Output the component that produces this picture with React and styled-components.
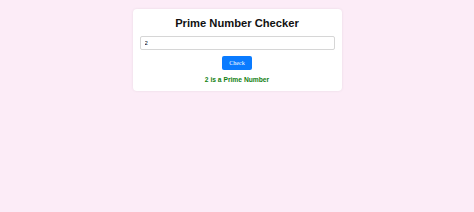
import React, { useState } from "react";
import styled, { createGlobalStyle } from "styled-components";

const GlobalStyle = createGlobalStyle`
  html, body {
    margin: 0;
    padding: 0;
    background: #fcecf7;
    font-family: "Liberation Sans", Arial, sans-serif;
  }
`;

const Page = styled.div`
  display: flex;
  justify-content: center;
  align-items: flex-start;
  padding-top: 9px;
  min-height: 212px;
  box-sizing: border-box;
`;

const Card = styled.div`
  width: 209px;
  box-sizing: border-box;
  background: #ffffff;
  border-radius: 4px;
  box-shadow: 0 0 3px rgba(0, 0, 0, 0.08);
  padding: 6px 7px 6px;
  display: flex;
  flex-direction: column;
  align-items: center;
`;

const Title = styled.h1`
  margin: 0;
  font-size: 11.2px;
  font-weight: bold;
  color: #111;
  line-height: 17px;
`;

const Input = styled.input`
  margin-top: 4px;
  width: 100%;
  height: 14px;
  box-sizing: border-box;
  border: 1px solid #d6d6d6;
  border-radius: 2px;
  padding: 0 4px;
  font-size: 6px;
  font-family: "Liberation Sans", Arial, sans-serif;
  outline: none;
`;

const Button = styled.button`
  margin-top: 6px;
  width: 30px;
  height: 14px;
  padding: 0;
  background: #0a7bff;
  color: #fff;
  border: none;
  border-radius: 2px;
  font-size: 6px;
  font-family: "Liberation Serif", serif;
  cursor: pointer;
`;

const Result = styled.p`
  margin: 5px 0 0;
  font-size: 6.7px;
  font-weight: bold;
  color: #118011;
  line-height: 10px;
`;

const isPrime = (n) => {
  if (!Number.isInteger(n) || n < 2) return false;
  for (let i = 2; i * i <= n; i++) if (n % i === 0) return false;
  return true;
};

export default function App() {
  const [value, setValue] = useState("2");
  const [result, setResult] = useState("2 is a Prime Number");

  const check = () => {
    const n = Number(value);
    setResult(isPrime(n) ? `${value} is a Prime Number` : `${value} is not a Prime Number`);
  };

  return (
    <>
      <GlobalStyle />
      <Page>
        <Card>
          <Title>Prime Number Checker</Title>
          <Input value={value} onChange={(e) => setValue(e.target.value)} />
          <Button onClick={check}>Check</Button>
          <Result>{result}</Result>
        </Card>
      </Page>
    </>
  );
}
